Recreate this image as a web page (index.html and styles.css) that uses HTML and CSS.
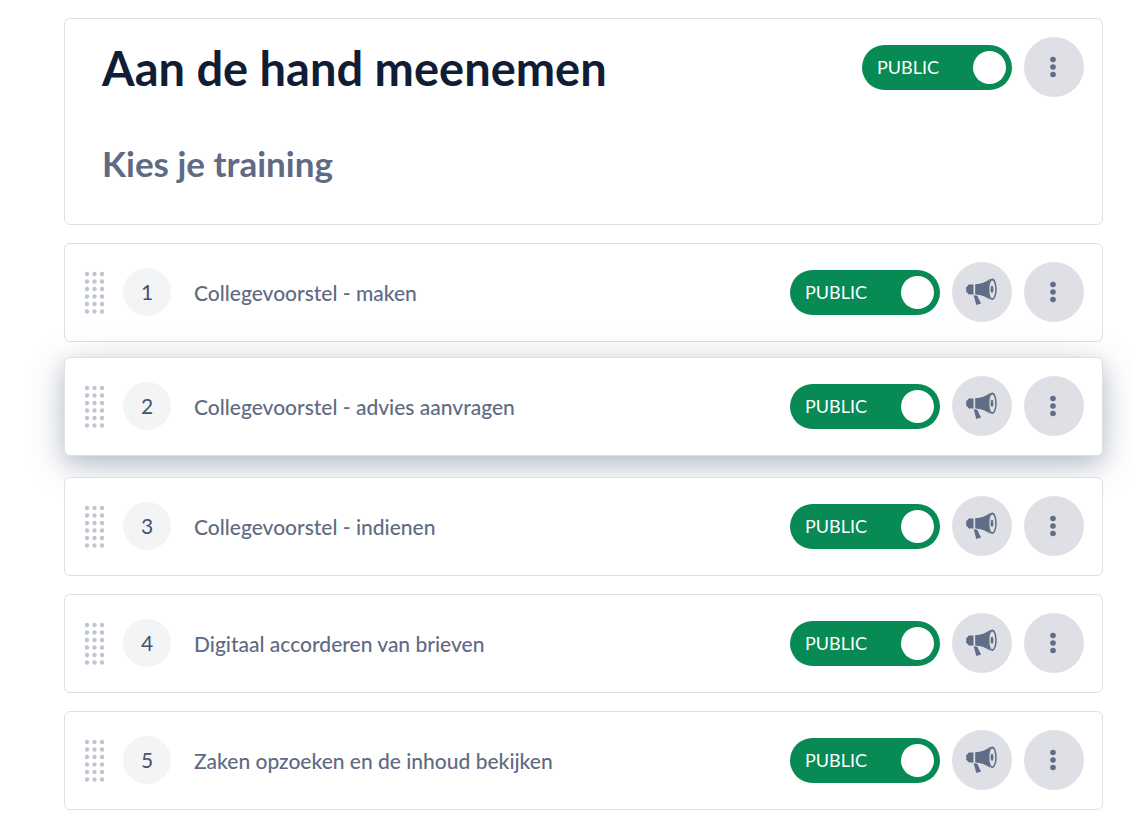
FILE: index.html
```
<!DOCTYPE html>
<html lang="nl">
<head>
    <meta charset="UTF-8">
    <meta name="viewport" content="width=device-width, initial-scale=1.0">
    <title>Aan de hand meenemen</title>
    <link rel="stylesheet" href="styles.css">
</head>
<body>
    <!-- Shared icons -->
    <svg class="sprite" aria-hidden="true">
        <symbol id="grip" viewBox="0 0 38 86">
            <g id="grip-row">
                <circle cx="4" cy="6" r="4.4"/>
                <circle cx="19" cy="6" r="4.4"/>
                <circle cx="34" cy="6" r="4.4"/>
            </g>
            <use href="#grip-row" y="15"/>
            <use href="#grip-row" y="30"/>
            <use href="#grip-row" y="45"/>
            <use href="#grip-row" y="60"/>
            <use href="#grip-row" y="75"/>
        </symbol>
        <symbol id="dots" viewBox="0 0 8 22">
            <circle cx="3" cy="3.5" r="2.8"/>
            <circle cx="3" cy="11" r="2.8"/>
            <circle cx="3" cy="18.5" r="2.8"/>
        </symbol>
        <symbol id="megaphone" viewBox="0 0 32 28">
            <path d="M7.500 6.600H3.200Q2 6.600 1.700 8L.2 9v5l1.500 1q.3 1.400 1.500 1.400h4.300z"/>
            <path d="M9.200 6.300C15 6 20 4.200 24.200.8c-2.300 5.500-2.300 15.500 0 20.900C20 18.500 15 16.700 9.200 16.400z"/>
            <path fill-rule="evenodd" d="M26.300.6c2.600 0 4.400 4.900 4.400 10.700s-1.800 10.700-4.400 10.700-4.400-4.900-4.400-10.700S23.700.6 26.300.6zm0 1.800c-1.600 0-2.900 3.900-2.900 8.900s1.300 8.900 2.900 8.900 2.900-3.900 2.900-8.900-1.300-8.900-2.900-8.900z"/>
            <ellipse cx="26" cy="11.300" rx="1.400" ry="3.500"/>
            <path d="M7.600 17.300l3.800.4 1 2.500 2.700 5.200-4.800 1.700-1.600-6z"/>
        </symbol>
    </svg>

    <main class="training">
        <header class="card intro">
            <div class="intro-text">
                <h1>Aan de hand meenemen</h1>
                <h2>Kies je training</h2>
            </div>
            <div class="actions">
                <label class="switch">PUBLIC <input type="checkbox" checked></label>
                <button class="round" type="button" aria-label="Meer opties"><svg class="dots"><use href="#dots"/></svg></button>
            </div>
        </header>

        <ol class="steps">
            <li class="card step">
                <svg class="grip"><use href="#grip"/></svg>
                <span class="number">1</span>
                <h3>Collegevoorstel - maken</h3>
                <div class="actions">
                    <label class="switch">PUBLIC <input type="checkbox" checked></label>
                    <button class="round" type="button" aria-label="Aankondigen"><svg class="megaphone"><use href="#megaphone"/></svg></button>
                    <button class="round" type="button" aria-label="Meer opties"><svg class="dots"><use href="#dots"/></svg></button>
                </div>
            </li>
            <li class="card step raised">
                <svg class="grip"><use href="#grip"/></svg>
                <span class="number">2</span>
                <h3>Collegevoorstel - advies aanvragen</h3>
                <div class="actions">
                    <label class="switch">PUBLIC <input type="checkbox" checked></label>
                    <button class="round" type="button" aria-label="Aankondigen"><svg class="megaphone"><use href="#megaphone"/></svg></button>
                    <button class="round" type="button" aria-label="Meer opties"><svg class="dots"><use href="#dots"/></svg></button>
                </div>
            </li>
            <li class="card step">
                <svg class="grip"><use href="#grip"/></svg>
                <span class="number">3</span>
                <h3>Collegevoorstel - indienen</h3>
                <div class="actions">
                    <label class="switch">PUBLIC <input type="checkbox" checked></label>
                    <button class="round" type="button" aria-label="Aankondigen"><svg class="megaphone"><use href="#megaphone"/></svg></button>
                    <button class="round" type="button" aria-label="Meer opties"><svg class="dots"><use href="#dots"/></svg></button>
                </div>
            </li>
            <li class="card step">
                <svg class="grip"><use href="#grip"/></svg>
                <span class="number">4</span>
                <h3>Digitaal accorderen van brieven</h3>
                <div class="actions">
                    <label class="switch">PUBLIC <input type="checkbox" checked></label>
                    <button class="round" type="button" aria-label="Aankondigen"><svg class="megaphone"><use href="#megaphone"/></svg></button>
                    <button class="round" type="button" aria-label="Meer opties"><svg class="dots"><use href="#dots"/></svg></button>
                </div>
            </li>
            <li class="card step">
                <svg class="grip"><use href="#grip"/></svg>
                <span class="number">5</span>
                <h3>Zaken opzoeken en de inhoud bekijken</h3>
                <div class="actions">
                    <label class="switch">PUBLIC <input type="checkbox" checked></label>
                    <button class="round" type="button" aria-label="Aankondigen"><svg class="megaphone"><use href="#megaphone"/></svg></button>
                    <button class="round" type="button" aria-label="Meer opties"><svg class="dots"><use href="#dots"/></svg></button>
                </div>
            </li>
        </ol>
    </main>
</body>
</html>
```
FILE: styles.css
```
* {
    box-sizing: border-box;
}
body {
    margin: 0;
    font-family: Lato, "Liberation Sans", sans-serif;
    background-color: #fff;
    color: #5f6b84;
}
h1, h2, h3 {
    margin: 0;
}
.sprite {
    position: absolute;
    width: 0;
    height: 0;
}
.training {
    display: flex;
    flex-direction: column;
    gap: 18px;
    padding: 18px 29px 15px 64px;
}
.card {
    display: flex;
    background-color: #fff;
    border: 1px solid #dfe0e6;
    border-radius: 6px;
}
.intro {
    justify-content: space-between;
    padding: 18px 18px 37px 37px;
}
.intro h1 {
    margin-bottom: 40px;
    font-size: 47px;
    line-height: 62px;
    color: #111d35;
}
.intro h2 {
    font-size: 35px;
    line-height: 48px;
}
.steps {
    display: flex;
    flex-direction: column;
    gap: 18px;
    margin: 0;
    padding: 0;
    list-style: none;
}
.step {
    align-items: center;
    padding: 18px 18px 19px 20px;
}
.step h3 {
    flex: 1;
    margin-left: 23px;
    padding-top: 2px;
    font-size: 21px;
    font-weight: 500;
    line-height: 28px;
}
.raised {
    transform: translateY(-3px);
    box-shadow: 0 8px 40px rgba(40, 58, 95, 0.2), 0 8px 22px rgba(40, 58, 95, 0.2);
}
/* keeps the neighbour below above the shadow */
.raised + .step {
    position: relative;
}
.grip {
    width: 19px;
    height: 43px;
    margin-right: 19px;
    fill: #bfc6d2;
}
.number {
    width: 48px;
    height: 48px;
    border-radius: 50%;
    background-color: #f3f4f6;
    color: #46536e;
    font-size: 21px;
    line-height: 48px;
    text-align: center;
}
.actions {
    display: flex;
    align-items: center;
    align-self: flex-start;
    gap: 12px;
}
.switch {
    display: flex;
    align-items: center;
    justify-content: space-between;
    width: 150px;
    height: 45px;
    padding: 0 6px 0 15px;
    border-radius: 23px;
    background-color: #078a54;
    color: #fff;
    font-size: 18px;
    line-height: 24px;
    cursor: pointer;
}
.switch input {
    appearance: none;
    width: 33px;
    height: 33px;
    margin: 0;
    border-radius: 50%;
    background-color: #fff;
    cursor: pointer;
}
.round {
    display: flex;
    align-items: center;
    justify-content: center;
    width: 60px;
    height: 60px;
    padding: 0;
    border: none;
    border-radius: 50%;
    background-color: #dfe0e6;
    fill: #5f6d87;
    cursor: pointer;
}
.round:hover {
    background-color: #d3d5dd;
}
.dots {
    width: 8px;
    height: 22px;
}
.megaphone {
    width: 32px;
    height: 28px;
}
```
